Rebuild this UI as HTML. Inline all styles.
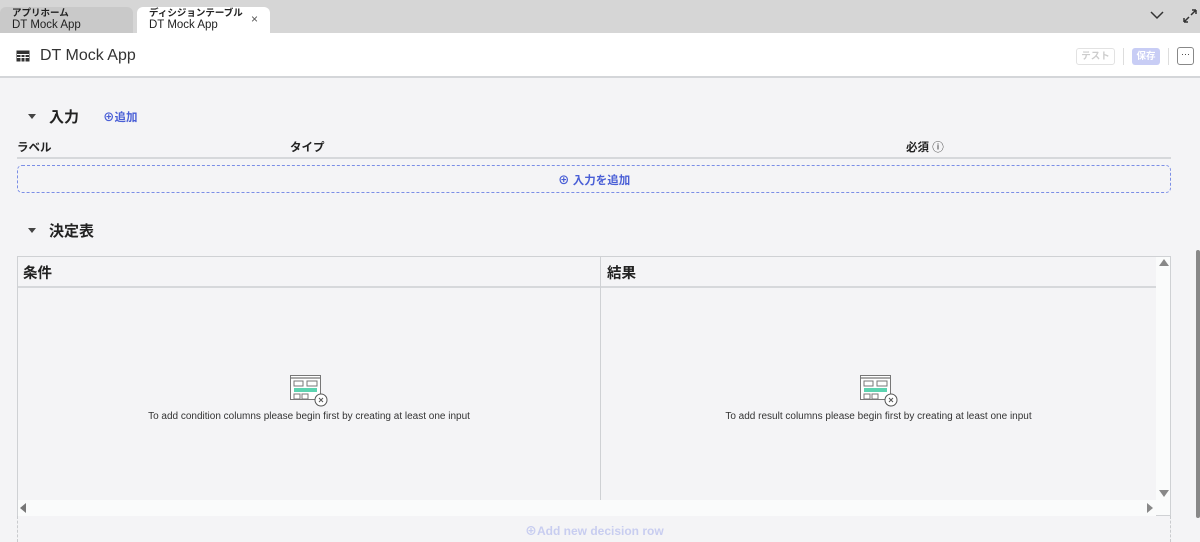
<!DOCTYPE html>
<html style="width:1200px;height:542px;overflow:hidden"><head><meta charset="utf-8"><style>
*{box-sizing:border-box;margin:0;padding:0}
body{width:1200px;height:542px;overflow:hidden;background:#f4f4f6;font-family:"Liberation Sans","Noto Sans CJK JP",sans-serif;color:#222;position:relative}
.abs{position:absolute}
.tabbar{left:0;top:0;width:1200px;height:33px;background:#d6d6d6}
.tab{top:7px;height:26px;border-radius:6px 6px 0 0;padding:1px 0 0 12px;font-size:10px;line-height:11px}
.tab b{display:block;font-size:9.5px}
.tab span{font-size:11.5px;line-height:13px}
.hdr{left:0;top:33px;width:1200px;height:45px;background:#fff;border-bottom:2px solid #d4d6d9}
.sec{font-size:15px;font-weight:bold}
.tri{width:0;height:0;border-left:4px solid transparent;border-right:4px solid transparent;border-top:5px solid #444}
.blue{color:#4a5fd6}
.th{font-size:11.5px;font-weight:bold;top:139px}
</style></head><body>
<div class="abs tabbar"></div>
<div class="abs tab" style="left:0;width:133px;background:#c9c9c9"><b>アプリホーム</b><span>DT Mock App</span></div>
<div class="abs tab" style="left:137px;width:133px;background:#fff"><b>ディシジョンテーブル</b><span>DT Mock App</span></div>
<div class="abs" style="left:251px;top:12px;font-size:12px;color:#555">×</div>
<svg class="abs" style="left:1150px;top:10px" width="14" height="10"><path d="M1 2l6 6 6-6" stroke="#333" stroke-width="1.5" fill="none"/></svg>
<svg class="abs" style="left:1182px;top:8px" width="16" height="16"><path d="M2 14l5-5M2 14h4M2 14v-4M14 2l-5 5M14 2h-4M14 2v4" stroke="#333" stroke-width="1.5" fill="none"/></svg>
<div class="abs hdr"></div>
<svg class="abs" style="left:16px;top:50px" width="14" height="12"><rect x="0.5" y="0.5" width="13" height="11" fill="#333"/><path d="M1 4.5h12M1 7.5h12M5 4v8M9 4v8" stroke="#fff" stroke-width="1"/></svg>
<div class="abs" style="left:40px;top:47px;font-size:16px;color:#333">DT Mock App</div>
<div class="abs" style="left:1076px;top:48px;width:39px;height:17px;border:1px solid #e2e2e2;border-radius:3px;font-size:9.5px;color:#ccc;text-align:center;line-height:15px;font-weight:bold">テスト</div>
<div class="abs" style="left:1123px;top:48px;width:1px;height:17px;background:#ddd"></div>
<div class="abs" style="left:1132px;top:48px;width:28px;height:17px;background:#c8cdf5;border-radius:3px;font-size:9.5px;color:#fff;text-align:center;line-height:17px;font-weight:bold">保存</div>
<div class="abs" style="left:1168px;top:48px;width:1px;height:17px;background:#ddd"></div>
<div class="abs" style="left:1177px;top:47px;width:17px;height:18px;border:1.5px solid #888;border-radius:3px;font-size:9px;text-align:center;line-height:12px;color:#333">···</div>

<div class="abs tri" style="left:28px;top:114px"></div>
<div class="abs sec" style="left:49px;top:106px">入力</div>
<div class="abs blue" style="left:103px;top:109px;font-size:11.5px;font-weight:bold">⊕追加</div>
<div class="abs th" style="left:17px">ラベル</div>
<div class="abs th" style="left:290px">タイプ</div>
<div class="abs th" style="left:906px">必須 <span style="font-weight:normal">ⓘ</span></div>
<div class="abs" style="left:17px;top:157px;width:1154px;height:2px;background:#d6d8db"></div>
<div class="abs" style="left:17px;top:165px;width:1154px;height:28px;border:1px dashed #7b8ee6;border-radius:5px"></div>
<div class="abs blue" style="left:558px;top:172px;font-size:11.5px;font-weight:bold">⊕ 入力を追加</div>

<div class="abs tri" style="left:28px;top:228px"></div>
<div class="abs sec" style="left:49px;top:220px">決定表</div>

<div class="abs" style="left:17px;top:256px;width:1154px;height:260px;border:1px solid #cfd1d4;background:#f4f4f6"></div>
<div class="abs" style="left:18px;top:286px;width:1138px;height:2px;background:#d6d8db"></div>
<div class="abs" style="left:600px;top:257px;width:1px;height:243px;background:#cfd1d4"></div>
<div class="abs" style="left:1156px;top:257px;width:14px;height:258px;background:#fafbfb"></div>
<div class="abs" style="left:18px;top:500px;width:1138px;height:16px;background:#fafbfb"></div>
<div class="abs sec" style="left:23px;top:262px;font-size:14.5px">条件</div>
<div class="abs sec" style="left:607px;top:262px;font-size:14.5px">結果</div>
<div class="abs" style="left:1159px;top:259px;border-left:5px solid transparent;border-right:5px solid transparent;border-bottom:7px solid #888"></div>
<div class="abs" style="left:1159px;top:490px;border-left:5px solid transparent;border-right:5px solid transparent;border-top:7px solid #888"></div>
<div class="abs" style="left:20px;top:503px;border-top:5px solid transparent;border-bottom:5px solid transparent;border-right:6px solid #777"></div>
<div class="abs" style="left:1147px;top:503px;border-top:5px solid transparent;border-bottom:5px solid transparent;border-left:6px solid #888"></div>

<svg class="abs" style="left:290px;top:375px" width="38" height="34"><rect x="0.5" y="0.5" width="30" height="24" fill="#fff" stroke="#777"/><path d="M1 3h29" stroke="#aaa" stroke-width="2"/><rect x="4" y="6" width="9" height="5" fill="none" stroke="#777"/><rect x="17" y="6" width="10" height="5" fill="none" stroke="#777"/><rect x="4" y="13" width="23" height="4" fill="#5dd3b0"/><rect x="4" y="19" width="6" height="5" fill="none" stroke="#777"/><rect x="12" y="19" width="6" height="5" fill="none" stroke="#777"/><circle cx="31" cy="25" r="6" fill="#fff" stroke="#555"/><path d="M29 23l4 4M33 23l-4 4" stroke="#555"/></svg>
<div class="abs" style="left:18px;top:411px;width:582px;text-align:center;font-size:10px;color:#333">To add condition columns please begin first by creating at least one input</div>
<svg class="abs" style="left:860px;top:375px" width="38" height="34"><rect x="0.5" y="0.5" width="30" height="24" fill="#fff" stroke="#777"/><path d="M1 3h29" stroke="#aaa" stroke-width="2"/><rect x="4" y="6" width="9" height="5" fill="none" stroke="#777"/><rect x="17" y="6" width="10" height="5" fill="none" stroke="#777"/><rect x="4" y="13" width="23" height="4" fill="#5dd3b0"/><rect x="4" y="19" width="6" height="5" fill="none" stroke="#777"/><rect x="12" y="19" width="6" height="5" fill="none" stroke="#777"/><circle cx="31" cy="25" r="6" fill="#fff" stroke="#555"/><path d="M29 23l4 4M33 23l-4 4" stroke="#555"/></svg>
<div class="abs" style="left:601px;top:411px;width:555px;text-align:center;font-size:10px;color:#333">To add result columns please begin first by creating at least one input</div>

<div class="abs" style="left:17px;top:516px;width:1154px;height:26px;border-left:1px dashed #c9cbce;border-right:1px dashed #c9cbce"></div>
<div class="abs" style="left:525px;top:522px;font-size:12px;font-weight:bold;color:#c8cdf0">⊕Add new decision row</div>
<div class="abs" style="left:1196px;top:250px;width:4px;height:268px;background:#888;border-radius:2px"></div>
</body></html>
